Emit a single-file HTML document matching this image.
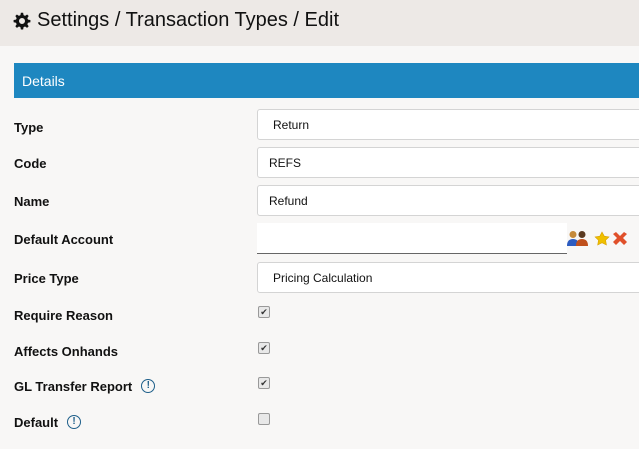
<!DOCTYPE html>
<html><head><style>
*{margin:0;padding:0;box-sizing:border-box}
body{width:639px;height:449px;overflow:hidden;background:#f8f7f6;font-family:"Liberation Sans",sans-serif;position:relative}
.hdr{position:absolute;left:0;top:0;width:639px;height:46px;background:#ede9e6}
.hdr span{position:absolute;left:37px;top:9px;font-size:20px;color:#111}
.bar{position:absolute;left:14px;top:63px;width:625px;height:35px;background:#1e87c0;color:#fff;font-size:14px;padding:10px 0 0 8px}
.lbl{position:absolute;left:14px;font-size:13px;font-weight:bold;color:#111;display:flex;align-items:center;height:16px}
.inp{position:absolute;left:257px;width:400px;height:31px;background:#fff;border:1px solid #d4d4d4;border-radius:3px;font-size:12px;color:#111;padding:8px 0 0 11px}
.cb{position:absolute;left:258px;width:12px;height:12px;border:1px solid #999;border-radius:2px;background:#e8e8e8;font-size:9px;line-height:10px;text-align:center;color:#333}
.inf{display:inline-block;width:14px;height:14px;border:1.5px solid #1e5f8a;border-radius:50%;color:#1e5f8a;font-size:10px;text-align:center;line-height:11px;margin-left:9px}
</style></head><body>
<div class="hdr"><svg style="position:absolute;left:13px;top:12px" width="18" height="18" viewBox="0 0 24 24"><path fill="#111" d="M12 8a4 4 0 100 8 4 4 0 000-8zm-1.5-7h3l.6 3.2 2 .9 2.7-1.8 2.1 2.1-1.8 2.7.9 2 3.2.6v3l-3.2.6-.9 2 1.8 2.7-2.1 2.1-2.7-1.8-2 .9-.6 3.2h-3l-.6-3.2-2-.9-2.7 1.8-2.1-2.1 1.8-2.7-.9-2-3.2-.6v-3l3.2-.6.9-2-1.8-2.7 2.1-2.1 2.7 1.8 2-.9z"/><circle cx="12" cy="12" r="2.8" fill="#ede9e6"/></svg><span>Settings / Transaction Types / Edit</span></div>
<div class="bar">Details</div>
<div class="lbl" style="top:119px">Type</div>
<div class="lbl" style="top:155px">Code</div>
<div class="lbl" style="top:193px">Name</div>
<div class="lbl" style="top:231px">Default Account</div>
<div class="lbl" style="top:270px">Price Type</div>
<div class="lbl" style="top:307px">Require Reason</div>
<div class="lbl" style="top:343px">Affects Onhands</div>
<div class="lbl" style="top:378px">GL Transfer Report<span class="inf">!</span></div>
<div class="lbl" style="top:414px">Default<span class="inf">!</span></div>
<div class="inp" style="top:109px;padding-left:15px">Return</div>
<div class="inp" style="top:147px">REFS</div>
<div class="inp" style="top:185px">Refund</div>
<div style="position:absolute;left:257px;top:223px;width:310px;height:31px;background:#fff;border-bottom:1px solid #666"></div>
<svg style="position:absolute;left:567px;top:229px" width="70" height="18" viewBox="0 0 70 18">
<circle cx="6" cy="5.5" r="3.5" fill="#c58a3a"/><path d="M0 17q0-7 6-7t6 7z" fill="#2c5bc0"/>
<circle cx="15" cy="5.5" r="3.5" fill="#5a3a20"/><path d="M9 17q0-7 6-7t6 7z" fill="#c0501c"/>
<path d="M35 3l2.3 4.2 4.7.7-3.4 3.3.8 4.8-4.4-2.3-4.3 2.3.8-4.8-3.4-3.3 4.7-.7z" fill="#f0c000" stroke="#d8a000" stroke-width=".6"/>
<path d="M46 5l3-2 4 4 4-4 3 2-4 4 4 4-3 3-4-4-4 4-3-3 4-4z" fill="#e0502a"/>
</svg>
<div class="inp" style="top:262px;padding-left:15px">Pricing Calculation</div>
<div class="cb" style="top:306px">✔</div>
<div class="cb" style="top:342px">✔</div>
<div class="cb" style="top:377px">✔</div>
<div class="cb" style="top:413px"></div>
</body></html>
